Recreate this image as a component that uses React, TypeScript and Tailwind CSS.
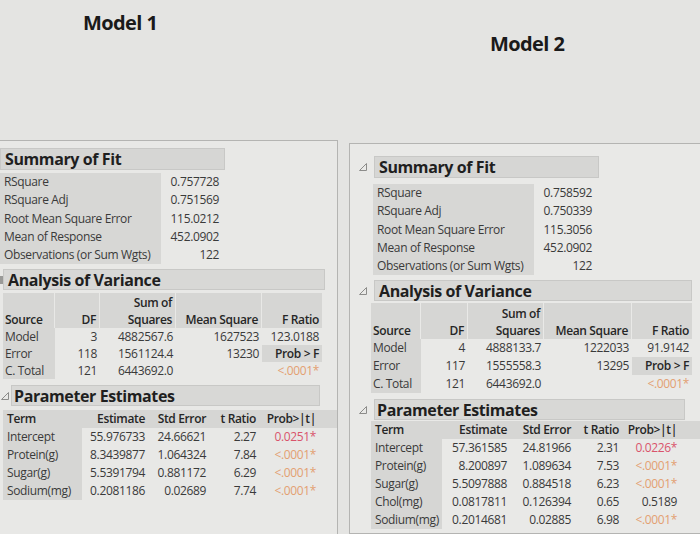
import React from 'react';

const red = 'text-[#d9546c]';
const orange = 'text-[#e3a072]';

function Tri() {
  return (
    <svg width="10" height="10" viewBox="0 0 10 10" className="shrink-0">
      <path d="M8.5 1.5 L8.5 8.5 L1.5 8.5 Z" fill="none" stroke="#8c8c8a" strokeWidth="1" />
    </svg>
  );
}

type Cell = { t: string; c?: string };

const ModelPanel = ({ side }: { side: 'left' | 'right' }) => {
  const left = side === 'left';

  const fit = left
    ? [['RSquare', '0.757728'], ['RSquare Adj', '0.751569'], ['Root Mean Square Error', '115.0212'], ['Mean of Response', '452.0902'], ['Observations (or Sum Wgts)', '122']]
    : [['RSquare', '0.758592'], ['RSquare Adj', '0.750339'], ['Root Mean Square Error', '115.3056'], ['Mean of Response', '452.0902'], ['Observations (or Sum Wgts)', '122']];

  const anova = left
    ? [['Model', '3', '4882567.6', '1627523', '123.0188'], ['Error', '118', '1561124.4', '13230', ''], ['C. Total', '121', '6443692.0', '', '']]
    : [['Model', '4', '4888133.7', '1222033', '91.9142'], ['Error', '117', '1555558.3', '13295', ''], ['C. Total', '121', '6443692.0', '', '']];

  const params: Cell[][] = left
    ? [
        [{ t: 'Intercept' }, { t: '55.976733' }, { t: '24.66621' }, { t: '2.27' }, { t: '0.0251*', c: red }],
        [{ t: 'Protein(g)' }, { t: '8.3439877' }, { t: '1.064324' }, { t: '7.84' }, { t: '<.0001*', c: orange }],
        [{ t: 'Sugar(g)' }, { t: '5.5391794' }, { t: '0.881172' }, { t: '6.29' }, { t: '<.0001*', c: orange }],
        [{ t: 'Sodium(mg)' }, { t: '0.2081186' }, { t: '0.02689' }, { t: '7.74' }, { t: '<.0001*', c: orange }],
      ]
    : [
        [{ t: 'Intercept' }, { t: '57.361585' }, { t: '24.81966' }, { t: '2.31' }, { t: '0.0226*', c: red }],
        [{ t: 'Protein(g)' }, { t: '8.200897' }, { t: '1.089634' }, { t: '7.53' }, { t: '<.0001*', c: orange }],
        [{ t: 'Sugar(g)' }, { t: '5.5097888' }, { t: '0.884518' }, { t: '6.23' }, { t: '<.0001*', c: orange }],
        [{ t: 'Chol(mg)' }, { t: '0.0817811' }, { t: '0.126394' }, { t: '0.65' }, { t: '0.5189' }],
        [{ t: 'Sodium(mg)' }, { t: '0.2014681' }, { t: '0.02885' }, { t: '6.98' }, { t: '<.0001*', c: orange }],
      ];

  const anovaCols = left ? 'grid-cols-[52px_45px_76px_86px_60px]' : 'grid-cols-[50px_47px_76px_88px_60px]';
  const paramCols = left ? 'grid-cols-[79px_66px_61px_50px_60px]' : 'grid-cols-[71px_68px_64px_48px_58px]';
  const rowH = left ? 'h-[17px]' : 'h-[18px]';

  return (
    <div
      className={
        left
          ? 'w-[338px] h-[394px] shrink-0 border-t border-r border-[#b4b4b2] bg-[#e8e8e6] pt-[7px]'
          : 'flex-1 h-[391px] border-t border-l border-[#b4b4b2] bg-[#e9e9e7] pt-[12px] pl-[8px]'
      }
    >
      {/* Summary of Fit */}
      <div className="flex items-center gap-[6px]">
        {!left && <Tri />}
        <div className="w-[225px] h-[22px] bg-[#d6d6d4] border border-[#c8c8c6] flex items-center pl-[4px] text-[16px] font-bold tracking-[-0.4px] text-[#1f1f1f]">
          Summary of Fit
        </div>
      </div>
      <div className={left ? 'mt-[3px] flex flex-col' : 'mt-[6px] ml-[15px] flex flex-col'}>
        {fit.map(([k, v]) => (
          <div key={k} className="flex h-[18.3px] items-center">
            <div className="w-[161px] h-full bg-[#d7d7d5] pl-[4px] flex items-center">{k}</div>
            <div className="w-[58px] text-right">{v}</div>
          </div>
        ))}
      </div>

      {/* Analysis of Variance */}
      <div className={left ? 'mt-[5px] flex items-center' : 'mt-[5px] flex items-center gap-[6px]'}>
        {left ? <div className="w-[3px] h-[8px] bg-[#9a9a98]" /> : <Tri />}
        <div className={(left ? 'w-[322px] ' : 'w-[318px] ') + 'h-[21px] bg-[#d8d8d6] border border-[#c8c8c6] flex items-center pl-[4px] text-[16px] font-bold tracking-[-0.4px] text-[#1f1f1f]'}>
          Analysis of Variance
        </div>
      </div>
      <div className={left ? 'mt-[3px] ml-[3px]' : 'mt-[2px] ml-[13px]'}>
        <div className={'grid ' + anovaCols + (left ? ' h-[35px]' : ' h-[36px]') + ' font-semibold leading-[17px] text-[#262626]'}>
          <div className="bg-[#d6d6d4] flex items-end pl-[2px] mr-[1px]">Source</div>
          <div className="bg-[#d6d6d4] flex items-end justify-end pr-[3px] mr-[1px]">DF</div>
          <div className="bg-[#d6d6d4] flex flex-col justify-end items-end pr-[3px] mr-[1px]">
            <span className="block">Sum of</span>
            <span className="block">Squares</span>
          </div>
          <div className="bg-[#d6d6d4] flex items-end justify-end pr-[3px] mr-[1px]">Mean Square</div>
          <div className="bg-[#d6d6d4] flex items-end justify-end pr-[3px]">F Ratio</div>
        </div>
        {anova.map((r, i) => (
          <div key={r[0]} className={'grid ' + anovaCols + ' ' + rowH}>
            <div className="bg-[#d6d6d4] pl-[2px] flex items-center">{r[0]}</div>
            <div className="text-right pr-[3px] flex items-center justify-end">{r[1]}</div>
            <div className="text-right pr-[3px] flex items-center justify-end">{r[2]}</div>
            <div className="text-right pr-[3px] flex items-center justify-end">{r[3]}</div>
            {i === 0 && <div className="pr-[3px] flex items-center justify-end">{r[4]}</div>}
            {i === 1 && <div className="bg-[#d6d6d4] pr-[3px] flex items-center justify-end font-semibold text-[#262626]">Prob &gt; F</div>}
            {i === 2 && <div className={'pr-[3px] flex items-center justify-end ' + orange}>&lt;.0001*</div>}
          </div>
        ))}
      </div>

      {/* Parameter Estimates */}
      <div className={left ? 'mt-[6px] flex items-center gap-[1px]' : 'mt-[6px] flex items-center gap-[6px]'}>
        <Tri />
        <div className={(left ? 'w-[309px] ' : 'w-[311px] ') + 'h-[21px] bg-[#d8d8d6] border border-[#c8c8c6] flex items-center pl-[2px] text-[16px] font-bold tracking-[-0.4px] text-[#1f1f1f]'}>
          Parameter Estimates
        </div>
      </div>
      <div className={left ? 'mt-[4px] ml-[3px]' : 'mt-[1px] ml-[13px]'}>
        <div className={'grid ' + paramCols + ' h-[18px] bg-[#d6d6d4] font-semibold text-[#262626]'}>
          <div className="pl-[4px] flex items-center">Term</div>
          <div className="pr-[3px] flex items-center justify-end">Estimate</div>
          <div className="pr-[3px] flex items-center justify-end">Std Error</div>
          <div className="pr-[3px] flex items-center justify-end">t Ratio</div>
          <div className="pr-[3px] flex items-center justify-end">Prob&gt;|t|</div>
        </div>
        {params.map(r => (
          <div key={r[0].t} className={'grid ' + paramCols + ' h-[18px]'}>
            {r.map((c, j) => (
              <div
                key={j}
                className={
                  j === 0
                    ? 'bg-[#d6d6d4] pl-[4px] flex items-center'
                    : 'pr-[3px] flex items-center justify-end ' + (c.c ?? '')
                }
              >
                {c.t}
              </div>
            ))}
          </div>
        ))}
      </div>
      {!left && <div className="mt-[4px] -ml-[8px] border-b border-[#b4b4b2]" />}
    </div>
  );
};

export default function App() {
  return (
    <div className="w-[700px] h-[534px] overflow-hidden whitespace-nowrap bg-[#e4e4e2] font-['Open_Sans','Noto_Sans',sans-serif] text-[12px] tracking-[-0.35px] leading-none text-[#3a3a3a]">
      {/* Titles */}
      <div className="h-[140px] flex">
        <div className="w-[490px] pl-[83px] pt-[13px] text-[20px] font-bold tracking-[-0.6px] text-[#1a1a1a]">Model 1</div>
        <div className="pt-[34px] text-[20px] font-bold tracking-[-0.6px] text-[#1a1a1a]">Model 2</div>
      </div>

      {/* Report panels */}
      <div className="flex gap-[11px] items-start">
        <ModelPanel side="left" />
        <div className="flex-1 mt-[3px] flex">
          <ModelPanel side="right" />
        </div>
      </div>
    </div>
  );
}
